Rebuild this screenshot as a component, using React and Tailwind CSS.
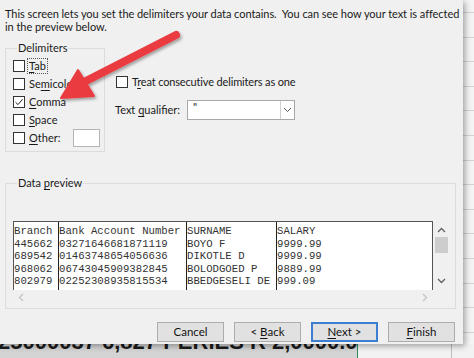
import React from "react";

const ui = { fontFamily: 'Lato, "Noto Sans", sans-serif' };
const mono = { fontFamily: '"Liberation Mono", "Courier New", monospace' };

function Box({ checked }) {
  return (
    <span className="w-[12px] h-[12px] border border-[#333] bg-white flex items-center justify-center shrink-0">
      {checked && (
        <svg width="10" height="10" viewBox="0 0 10 10">
          <path d="M1.5 5.2 L4 7.6 L8.6 2.2" fill="none" stroke="#222" strokeWidth="1" />
        </svg>
      )}
    </span>
  );
}

function U({ children }) {
  return <span className="underline underline-offset-[2px] decoration-[1px]">{children}</span>;
}

function Btn({ children, primary }) {
  return (
    <div
      className={
        "w-[67px] h-[20px] flex items-center justify-center text-[11.5px] text-[#111] bg-[#e1e1e1] " +
        (primary ? "border-2 border-[#3c7fd0]" : "border border-[#adadad]")
      }
    >
      <span className="whitespace-pre">{children}</span>
    </div>
  );
}

const rows = [
  ["Branch", "Bank Account Number", "SURNAME", "SALARY"],
  ["445662", "03271646681871119", "BOYO F", "9999.99"],
  ["689542", "01463748654056636", "DIKOTLE D", "9999.99"],
  ["968062", "06743045909382845", "BOLODGOED P", "9889.99"],
  ["802979", "02252308935815534", "BBEDGESELI DE", "999.09"],
];

function Col({ i, w, first }) {
  return (
    <div className={"h-full pt-[3px] shrink-0 " + (first ? "" : "border-l border-[#222]")} style={{ width: w }}>
      {rows.map((r, k) => (
        <div key={k} className="h-[12.5px] leading-[12.5px] whitespace-pre overflow-hidden">
          {r[i]}
        </div>
      ))}
    </div>
  );
}

export default function App() {
  return (
    <div className="w-[474px] h-[358px] overflow-hidden relative bg-white flex flex-col" style={ui}>
      <div className="flex h-[344px] shrink-0">
        {/* dialog */}
        <div className="w-[463px] h-full bg-[#f0f0f0] shrink-0 relative z-10 overflow-hidden shadow-[2px_2px_6px_rgba(0,0,0,0.35)] pl-[5px] pr-[8px] pt-[7px] flex flex-col text-[#1a1a1a]">
          <p className="text-[11px] leading-[13px] whitespace-nowrap tracking-[-0.05px]">
            This screen lets you set the delimiters your data contains.&nbsp; You can see how your text is affected
            <br />
            in the preview below.
          </p>

          <div className="flex mt-[8px]">
            <fieldset className="w-[100px] h-[111px] border border-[#dcdcdc] pl-[7px] pt-[2px]">
              <legend className="ml-[4px] px-[1px] text-[11px] leading-[14px]">Delimiters</legend>
              <div className="flex flex-col text-[11px]">
                <div className="h-[18px] flex items-center gap-[2px]">
                  <Box />
                  <span className="border border-dotted border-[#555] px-[1px] leading-[14px]">
                    <U>T</U>ab
                  </span>
                </div>
                <div className="h-[18px] flex items-center gap-[4px]">
                  <Box />
                  <span>
                    Se<U>m</U>icolon
                  </span>
                </div>
                <div className="h-[18px] flex items-center gap-[4px]">
                  <Box checked />
                  <span>
                    <U>C</U>omma
                  </span>
                </div>
                <div className="h-[18px] flex items-center gap-[4px]">
                  <Box />
                  <span>
                    <U>S</U>pace
                  </span>
                </div>
                <div className="h-[18px] flex items-center gap-[4px]">
                  <Box />
                  <span>
                    <U>O</U>ther:
                  </span>
                  <span className="ml-[9px] w-[27px] h-[18px] bg-white border border-[#b5b5b5]" />
                </div>
              </div>
            </fieldset>

            <div className="ml-[10px] flex flex-col text-[11px]">
              <div className="mt-[32px] h-[18px] flex items-center gap-[4px] ml-[1px]">
                <Box />
                <span className="tracking-[-0.15px]">
                  T<U>r</U>eat consecutive delimiters as one
                </span>
              </div>
              <div className="mt-[9px] flex items-center">
                <span className="w-[72px]">
                  Text <U>q</U>ualifier:
                </span>
                <div className="w-[108px] h-[20px] bg-white border border-[#a8a8a8] flex">
                  <span className="flex-1 pl-[5px] leading-[12px] text-[11px]">"</span>
                  <span className="w-[14px] h-full border-l border-[#d0d0d0] flex items-center justify-center">
                    <svg width="9" height="6" viewBox="0 0 9 6">
                      <path d="M1 1 L4.5 4.5 L8 1" fill="none" stroke="#555" strokeWidth="1" />
                    </svg>
                  </span>
                </div>
              </div>
            </div>
          </div>

          <fieldset className="mt-[24px] w-[451px] border border-[#dcdcdc] pl-[7px] pr-[5px] pt-[31px] pb-[3px]">
            <legend className="ml-[4px] px-[1px] text-[11px] leading-[14px]">
              Data <U>p</U>review
            </legend>
            <div className="flex">
              <div className="w-[420px] h-[69px] bg-white border-t border-l border-r border-[#555] flex text-[10.67px] text-[#333]" style={mono}>
                <Col i={0} w={44} first />
                <Col i={1} w={128} />
                <Col i={2} w={90} />
                <Col i={3} w={155} />
              </div>
              <div className="w-[17px] h-[69px] flex flex-col items-center">
                <svg className="mt-[6px]" width="9" height="6" viewBox="0 0 9 6">
                  <path d="M1 5 L4.5 1.5 L8 5" fill="none" stroke="#606060" strokeWidth="1.3" />
                </svg>
                <div className="mt-[4px] w-[13px] h-[16px] bg-[#cdcdcd]" />
                <div className="flex-1" />
                <svg className="mb-[6px]" width="9" height="6" viewBox="0 0 9 6">
                  <path d="M1 1 L4.5 4.5 L8 1" fill="none" stroke="#606060" strokeWidth="1.3" />
                </svg>
              </div>
            </div>
            <div className="w-[420px] h-[15px] flex items-center justify-between px-[5px]">
              <svg width="6" height="9" viewBox="0 0 6 9">
                <path d="M5 1 L1.5 4.5 L5 8" fill="none" stroke="#c4c4c4" strokeWidth="1.3" />
              </svg>
              <svg width="6" height="9" viewBox="0 0 6 9">
                <path d="M1 1 L4.5 4.5 L1 8" fill="none" stroke="#c4c4c4" strokeWidth="1.3" />
              </svg>
            </div>
          </fieldset>

          <div className="mt-[13px] flex justify-end gap-[10px]">
            <Btn>Cancel</Btn>
            <Btn>
              {"< "}
              <U>B</U>ack
            </Btn>
            <Btn primary>
              <U>N</U>
              {"ext >"}
            </Btn>
            <Btn>
              <U>F</U>inish
            </Btn>
          </div>
        </div>

        {/* spreadsheet strip on the right */}
        <div className="flex-1 bg-[#f4f4f4] flex flex-col">
          <div className="h-[12px] shrink-0" />
          {Array.from({ length: 14 }).map((_, k) => (
            <div key={k} className="h-[24.6px] shrink-0 border-t border-[#d2d2d2]" />
          ))}
        </div>
      </div>

      {/* bottom spreadsheet row */}
      <div className="flex-1 flex bg-[#d4d4d4] overflow-hidden relative">
        <div className="w-[358px] border-r border-[#2e8b57] overflow-hidden">
          <div className="mt-[-15px] ml-[-2px] text-[22px] leading-[26px] font-semibold text-[#1b1b1b] whitespace-nowrap" style={{ fontFamily: '"Liberation Sans", Arial, sans-serif' }}>
            25000037 6,827 PERIES R 2,0000.00
          </div>
        </div>
        <div className="w-[94px] bg-[#f2f2f2] border-r border-[#bdbdbd]" />
        <div className="flex-1 bg-[#f2f2f2]" />
      </div>

      {/* red annotation arrow */}
      <svg className="absolute left-0 top-0 pointer-events-none z-20" width="474" height="358" viewBox="0 0 474 358">
        <defs>
          <filter id="sh" x="-20%" y="-20%" width="140%" height="140%">
            <feDropShadow dx="1.5" dy="2" stdDeviation="1.8" floodColor="#000" floodOpacity="0.35" />
          </filter>
        </defs>
        <g filter="url(#sh)">
          <line x1="84" y1="82" x2="176" y2="35" stroke="#ea3b3f" strokeWidth="8" strokeLinecap="round" />
          <polygon points="61,98 78,70 94,96" fill="#ea3b3f" strokeLinejoin="round" stroke="#ea3b3f" strokeWidth="2" />
        </g>
      </svg>
    </div>
  );
}
